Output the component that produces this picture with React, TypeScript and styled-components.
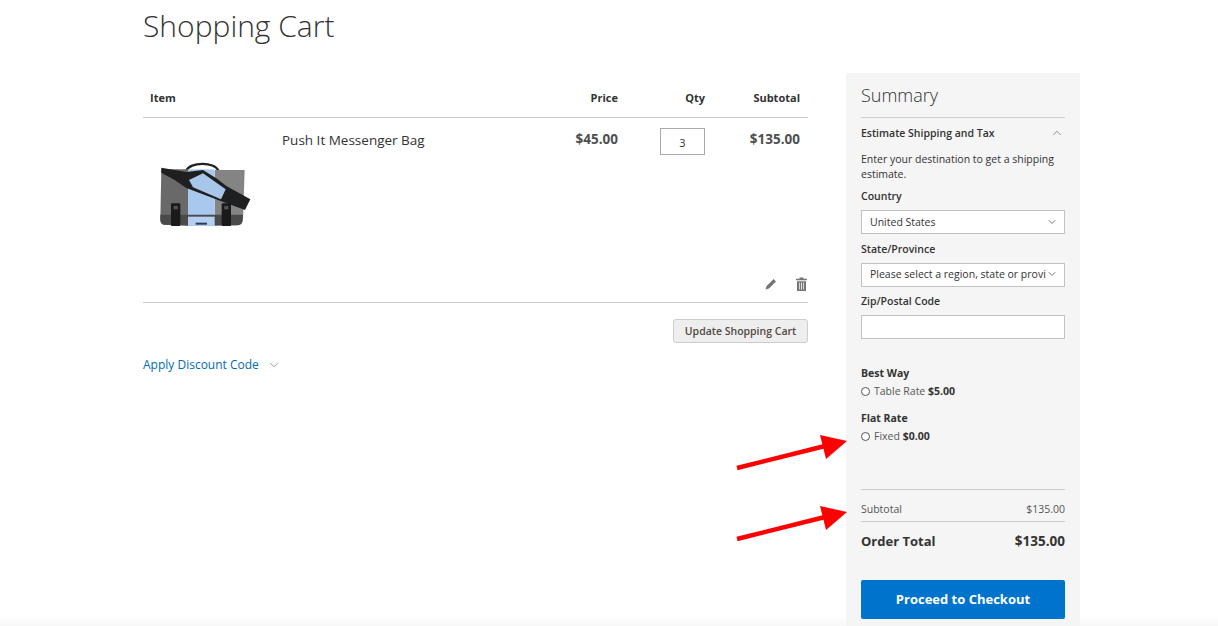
import * as React from 'react'
import styled, { createGlobalStyle } from 'styled-components'
import { ChevronDown, ChevronUp } from 'lucide-react'

const GlobalStyle = createGlobalStyle`
  html, body {
    margin: 0;
    padding: 0;
    background: #fff;
  }
  * {
    box-sizing: border-box;
  }
`

const Page = styled.div`
  position: relative;
  width: 1218px;
  height: 626px;
  overflow: hidden;
  padding-left: 143px;
  background: linear-gradient(to bottom, #fff 616px, #f8f8f8 626px);
  font-family: "Open Sans", sans-serif;
  color: #333;
`

const Title = styled.h1`
  margin: 0;
  height: 73px;
  padding-top: 4px;
  font-size: 30px;
  line-height: 44px;
  font-weight: 300;
  color: #333;
`

const Columns = styled.div`
  display: flex;
  gap: 38px;
  width: 937px;
`

const CartColumn = styled.div`
  width: 665px;
`

const CartHead = styled.div`
  display: grid;
  grid-template-columns: 368px 100px 87px 95px;
  height: 45px;
  padding: 17px 8px 0 7px;
  border-bottom: 1px solid #ccc;
  font-size: 11px;
  line-height: 16px;
  font-weight: 700;
  color: #333;
`

const HeadCell = styled.div<{ $right?: boolean }>`
  text-align: ${props => (props.$right ? 'right' : 'left')};
`

const CartRow = styled.div`
  display: grid;
  grid-template-columns: 139px 236px 100px 87px 95px;
  height: 158px;
  padding: 10px 8px 0 0;
`

const Thumb = styled.svg`
  display: block;
  margin-top: -8px;
  filter: blur(0.4px);
`

const ItemName = styled.div`
  font-size: 13.5px;
  line-height: 24px;
  color: #333;
`

const Money = styled.div`
  text-align: right;
  font-size: 13.5px;
  line-height: 22px;
  font-weight: 700;
  color: #4f4f4f;
`

const QtyCell = styled.div`
  display: flex;
  justify-content: flex-end;
`

const QtyBox = styled.div`
  width: 45px;
  height: 27px;
  border: 1px solid #aaa;
  background: #fff;
  font-size: 11px;
  line-height: 27px;
  text-align: center;
  color: #333;
`

const ItemActions = styled.div`
  display: flex;
  justify-content: flex-end;
  align-items: center;
  gap: 19px;
  height: 27px;
  padding: 0 1px 10px 0;
  border-bottom: 1px solid #ccc;
`

const ActionIcon = styled.svg`
  display: block;
  fill: #757575;
`

const UpdateRow = styled.div`
  display: flex;
  justify-content: flex-end;
  padding-top: 16px;
`

const UpdateButton = styled.button`
  width: 135px;
  height: 24px;
  padding: 0;
  border: 1px solid #cdcdcd;
  border-radius: 3px;
  background: #eee;
  font-family: inherit;
  font-size: 10.5px;
  font-weight: 600;
  color: #514943;
`

const DiscountLink = styled.a`
  display: flex;
  align-items: center;
  gap: 8px;
  margin-top: 12px;
  font-size: 12px;
  line-height: 20px;
  color: #006bb4;
  svg {
    color: #666;
  }
`

const Summary = styled.aside`
  width: 234px;
  height: 553px;
  padding: 9px 15px 0;
  background: #f5f5f5;
`

const SummaryTitle = styled.div`
  height: 36px;
  font-size: 18px;
  line-height: 26px;
  font-weight: 300;
  color: #333;
  border-bottom: 1px solid #ccc;
`

const EstimateHead = styled.div`
  display: flex;
  justify-content: space-between;
  align-items: center;
  height: 30px;
  font-size: 10.5px;
  font-weight: 600;
  color: #333;
  svg {
    color: #666;
    margin-right: 1px;
  }
`

const Hint = styled.div`
  margin-top: 3.7px;
  font-size: 10.5px;
  line-height: 15px;
  color: #333;
`

const Label = styled.div`
  margin-top: 6.5px;
  height: 17px;
  font-size: 10.5px;
  line-height: 17px;
  font-weight: 600;
  color: #333;
`

const SelectBox = styled.div`
  display: flex;
  align-items: center;
  justify-content: space-between;
  width: 204px;
  height: 24px;
  margin-top: 5px;
  padding: 0 6px 1px 8px;
  border: 1px solid #c2c2c2;
  background: #fff;
  font-size: 10.5px;
  color: #333;
  white-space: nowrap;
  svg {
    flex: none;
    color: #333;
  }
`

const SelectText = styled.span`
  overflow: hidden;
  width: 177px;
`

const ZipInput = styled.div`
  width: 204px;
  height: 24px;
  margin-top: 5px;
  border: 1px solid #c2c2c2;
  background: #fff;
`

const Carrier = styled.div<{ $gap: number }>`
  margin-top: ${props => props.$gap}px;
  height: 17px;
  font-size: 10.5px;
  line-height: 17px;
  font-weight: 700;
  color: #333;
`

const RateRow = styled.div`
  display: flex;
  align-items: center;
  gap: 4px;
  height: 19px;
  font-size: 10.5px;
  color: #555;
  b {
    color: #333;
  }
`

const Radio = styled.span`
  width: 9px;
  height: 9px;
  border-radius: 50%;
  border: 1px solid #555;
  background: #fff;
`

const Totals = styled.div`
  margin-top: 43px;
  border-top: 1px solid #ccc;
`

const TotalLine = styled.div`
  display: flex;
  justify-content: space-between;
  align-items: center;
  height: 32px;
  padding-top: 8px;
  border-bottom: 1px solid #ccc;
  font-size: 10.5px;
  color: #555;
`

const GrandLine = styled.div`
  display: flex;
  justify-content: space-between;
  align-items: center;
  height: 38px;
  font-size: 13.5px;
  font-weight: 700;
  color: #333;
  span:first-child {
    font-size: 13px;
  }
`

const CheckoutButton = styled.button`
  display: block;
  width: 204px;
  height: 39px;
  margin-top: 20px;
  padding: 0;
  border: none;
  border-radius: 2px;
  background: #0074cc;
  font-family: inherit;
  font-size: 13px;
  font-weight: 700;
  color: #fff;
`

const Arrows = styled.svg`
  position: absolute;
  left: 0;
  top: 0;
  pointer-events: none;
`

// coordinates are 3x the on-screen pixels, read from a zoomed crop
function BagImage() {
  return (
    <Thumb width="139" height="120" viewBox="0 0 417 360">
      <path d="M130 152 C140 126 215 124 226 152" fill="none" stroke="#222" strokeWidth="7" />
      <path d="M55 148 L135 148 L135 318 L62 314 Q52 312 52 298 Z" fill="#696969" />
      <path d="M215 150 L305 150 L300 300 Q298 314 285 316 L215 318 Z" fill="#848484" />
      <rect x="135" y="148" width="80" height="170" fill="#a9c8ee" />
      <path d="M52 284 L300 284 L298 304 Q296 314 285 316 L62 314 Q52 312 52 298 Z" fill="#4a4a4b" />
      <rect x="135" y="290" width="80" height="26" fill="#b4d0f0" />
      <path d="M55 143 L130 156 L180 150 L222 176 L250 198 L322 238 L306 270 L235 244 L130 204 L95 180 L55 158 Z" fill="#1f1f1f" />
      <path d="M138 180 L180 160 L248 208 L234 238 L150 202 Z" fill="#a8c6ea" />
      <rect x="84" y="250" width="28" height="68" rx="3" fill="#1a1a1a" />
      <rect x="236" y="250" width="28" height="68" rx="3" fill="#1a1a1a" />
      <rect x="92" y="258" width="12" height="10" fill="#555" />
      <rect x="244" y="258" width="12" height="10" fill="#555" />
      <rect x="158" y="308" width="34" height="6" fill="#2c3b52" />
    </Thumb>
  )
}

export default function App() {
  return (
    <Page>
      <GlobalStyle />
      <Title>Shopping Cart</Title>
      <Columns>
        <CartColumn>
          <CartHead>
            <HeadCell>Item</HeadCell>
            <HeadCell $right>Price</HeadCell>
            <HeadCell $right>Qty</HeadCell>
            <HeadCell $right>Subtotal</HeadCell>
          </CartHead>
          <CartRow>
            <BagImage />
            <ItemName>Push It Messenger Bag</ItemName>
            <Money>$45.00</Money>
            <QtyCell><QtyBox>3</QtyBox></QtyCell>
            <Money>$135.00</Money>
          </CartRow>
          <ItemActions>
            <ActionIcon width="12" height="12" viewBox="0 0 12 12">
              <path d="M0.5 11.5 L1.6 8 L8.6 1 L11 3.4 L4 10.4 Z" />
            </ActionIcon>
            <ActionIcon width="11" height="14" viewBox="0 0 11 14">
              <path d="M3.5 0.5 H7.5 V1.8 H11 V3.2 H0 V1.8 H3.5 Z M1 4.2 H10 V14 H1 Z M3 5.5 V12.5 H3.7 V5.5 Z M5.1 5.5 V12.5 H5.9 V5.5 Z M7.3 5.5 V12.5 H8 V5.5 Z" fillRule="evenodd" />
            </ActionIcon>
          </ItemActions>
          <UpdateRow>
            <UpdateButton>Update Shopping Cart</UpdateButton>
          </UpdateRow>
          <DiscountLink>
            Apply Discount Code
            <ChevronDown size={14} strokeWidth={1.2} />
          </DiscountLink>
        </CartColumn>
        <Summary>
          <SummaryTitle>Summary</SummaryTitle>
          <EstimateHead>
            Estimate Shipping and Tax
            <ChevronUp size={14} strokeWidth={1.2} />
          </EstimateHead>
          <Hint>Enter your destination to get a shipping estimate.</Hint>
          <Label>Country</Label>
          <SelectBox>
            <SelectText>United States</SelectText>
            <ChevronDown size={12} strokeWidth={1.3} />
          </SelectBox>
          <Label>State/Province</Label>
          <SelectBox>
            <SelectText>Please select a region, state or province.</SelectText>
            <ChevronDown size={12} strokeWidth={1.3} />
          </SelectBox>
          <Label>Zip/Postal Code</Label>
          <ZipInput />
          <Carrier $gap={25.8}>Best Way</Carrier>
          <RateRow><Radio /><span>Table Rate <b>$5.00</b></span></RateRow>
          <Carrier $gap={9}>Flat Rate</Carrier>
          <RateRow><Radio /><span>Fixed <b>$0.00</b></span></RateRow>
          <Totals>
            <TotalLine><span>Subtotal</span><span>$135.00</span></TotalLine>
            <GrandLine><span>Order Total</span><span>$135.00</span></GrandLine>
          </Totals>
          <CheckoutButton>Proceed to Checkout</CheckoutButton>
        </Summary>
      </Columns>
      <Arrows width="1218" height="626" viewBox="0 0 1218 626">
        <path d="M737 468 L825 446" stroke="#f00" strokeWidth="4.5" />
        <path d="M820 435 L847 441 L826 459 Z" fill="#f00" />
        <path d="M737 539 L825 517" stroke="#f00" strokeWidth="4.5" />
        <path d="M820 506 L847 512 L826 530 Z" fill="#f00" />
      </Arrows>
    </Page>
  )
}
